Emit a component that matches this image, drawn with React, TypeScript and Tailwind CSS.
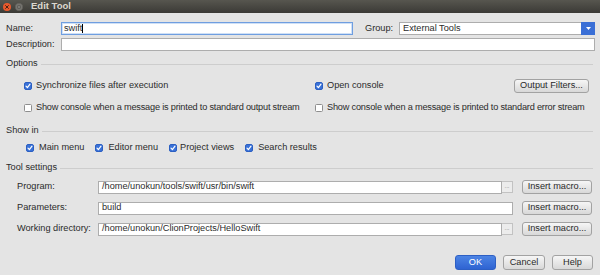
import React from "react";

const font = "font-['Liberation_Sans',Arial,sans-serif]";

function Check({ checked }: { checked?: boolean }) {
  if (checked) {
    return (
      <span className="w-[8px] h-[8px] shrink-0 rounded-[2px] bg-[#3a72d8] border border-[#2b5fc2] flex items-center justify-center">
        <svg width="6" height="6" viewBox="0 0 6 6">
          <path d="M1 3.2 L2.4 4.6 L5 1.2" fill="none" stroke="#fff" strokeWidth="1.2" strokeLinecap="round" strokeLinejoin="round" />
        </svg>
      </span>
    );
  }
  return <span className="w-[8px] h-[8px] shrink-0 rounded-[1.5px] bg-white border border-[#8e8e8e]" />;
}

function CheckItem({ label, checked, gap = "ml-[5px]" }: { label: string; checked?: boolean; gap?: string }) {
  return (
    <div className="flex items-center shrink-0 whitespace-nowrap">
      <Check checked={checked} />
      <span className={gap}>{label}</span>
    </div>
  );
}

function Section({ title }: { title: string }) {
  return (
    <div className="h-[10px] flex items-center">
      <span>{title}</span>
      <div className="flex-1 h-px bg-[#cdcdcd] ml-[3px] mr-[2px]" />
    </div>
  );
}

function Btn({ children, className = "" }: { children: React.ReactNode; className?: string }) {
  return (
    <div
      className={
        "flex items-center justify-center shrink-0 whitespace-nowrap rounded-[3px] border border-[#a2a2a2] bg-gradient-to-b from-[#f6f6f6] to-[#d8d8d8] text-[#2a2a2a] " +
        className
      }
    >
      {children}
    </div>
  );
}

function Field({ value, dots }: { value: string; dots?: boolean }) {
  return (
    <div className="flex-1 flex items-center">
      <div className="flex-1 h-[13px] bg-white border border-[#adadad] flex items-center pl-[3px]">{value}</div>
      {dots && (
        <div className="w-[11px] h-[12px] bg-[#ececec] border border-[#c2c2c2] border-l-0 flex items-center justify-center text-[6px] text-[#777] leading-none pb-[2px]">
          ...
        </div>
      )}
    </div>
  );
}

function ToolRow({ label, value, dots }: { label: string; value: string; dots?: boolean }) {
  return (
    <div className="mt-[7px] h-[14px] flex items-center pl-[11px] pr-[3px]">
      <span className="w-[81px]">{label}</span>
      <Field value={value} dots={dots} />
      <Btn className="ml-[9px] w-[70px] h-[14px]">Insert macro...</Btn>
    </div>
  );
}

export default function App() {
  return (
    <div className={`w-[600px] h-[275px] overflow-hidden bg-[#e4e4e4] text-[9.2px] text-[#2b2b2b] flex flex-col ${font}`}>
      {/* title bar */}
      <div className="h-[13px] shrink-0 bg-gradient-to-b from-[#57564f] to-[#3b3a36] flex items-center pl-[3px]">
        <svg width="8" height="8" viewBox="0 0 8 8">
          <circle cx="4" cy="4" r="4" fill="#e9592c" />
          <path d="M2.6 2.6 L5.4 5.4 M5.4 2.6 L2.6 5.4" stroke="#4a2012" strokeWidth="1" strokeLinecap="round" />
        </svg>
        <svg width="8" height="8" viewBox="0 0 8 8" className="ml-[4px]">
          <circle cx="4" cy="4" r="3.7" fill="#7a7974" stroke="#5e5d58" strokeWidth="0.6" />
          <circle cx="4" cy="4" r="1.8" fill="none" stroke="#555450" strokeWidth="0.8" />
        </svg>
        <span className="ml-[8px] font-bold text-[9.5px] text-[#dcd8cf]">Edit Tool</span>
      </div>

      <div className="flex flex-col pl-[6px] pr-[5px]">
        {/* name / group */}
        <div className="mt-[9px] h-[13px] flex items-center">
          <span className="w-[55px]">Name:</span>
          <div className="w-[292px] h-[13px] bg-white border border-[#6f9ee0] shadow-[inset_0_0_0_1px_#cfe0f6] flex items-center pl-[2px]">
            swift<span className="w-px h-[9px] bg-black" />
          </div>
          <span className="ml-[12px] w-[34px]">Group:</span>
          <div className="flex-1 h-[13px] bg-white border border-[#adadad] flex items-center">
            <span className="flex-1 pl-[3px]">External Tools</span>
            <div className="w-[14px] h-[13px] -mr-px bg-[#3a6fd6] flex items-center justify-center">
              <svg width="5" height="3" viewBox="0 0 5 3">
                <path d="M0 0 H5 L2.5 3 Z" fill="#fff" />
              </svg>
            </div>
          </div>
        </div>

        {/* description */}
        <div className="mt-[3px] h-[13px] flex items-center">
          <span className="w-[55px]">Description:</span>
          <div className="flex-1 h-[13px] bg-white border border-[#adadad]" />
        </div>

        <div className="mt-[8px]">
          <Section title="Options" />
        </div>

        <div className="mt-[10px] h-[14px] flex items-center pl-[18px]">
          <div className="w-[291px] shrink-0">
            <CheckItem checked label="Synchronize files after execution" gap="ml-[4px]" />
          </div>
          <CheckItem checked label="Open console" gap="ml-[4px]" />
          <Btn className="ml-auto mr-[6px] w-[75px] h-[14px]">Output Filters...</Btn>
        </div>

        <div className="mt-[8px] h-[14px] flex items-center pl-[18px] tracking-[-0.2px]">
          <div className="w-[291px] shrink-0">
            <CheckItem label="Show console when a message is printed to standard output stream" gap="ml-[4px]" />
          </div>
          <CheckItem label="Show console when a message is printed to standard error stream" gap="ml-[4px]" />
        </div>

        <div className="mt-[11px]">
          <Section title="Show in" />
        </div>

        <div className="mt-[5px] h-[13px] flex items-center pl-[20px] gap-[11px]">
          <CheckItem checked label="Main menu" />
          <CheckItem checked label="Editor menu" />
          <CheckItem checked label="Project views" gap="ml-[3px]" />
          <CheckItem checked label="Search results" />
        </div>

        <div className="mt-[9px]">
          <Section title="Tool settings" />
        </div>

        <ToolRow label="Program:" value="/home/unokun/tools/swift/usr/bin/swift" dots />
        <ToolRow label="Parameters:" value="build" />
        <ToolRow label="Working directory:" value="/home/unokun/ClionProjects/HelloSwift" dots />

        {/* dialog buttons */}
        <div className="mt-[19px] h-[15px] flex justify-end gap-[7px] pr-[2px]">
          <div className="w-[41px] h-[15px] rounded-[3px] border border-[#2d5fc4] bg-gradient-to-b from-[#4c84e4] to-[#2f63d2] text-white flex items-center justify-center">
            OK
          </div>
          <Btn className="w-[42px] h-[15px]">Cancel</Btn>
          <Btn className="w-[41px] h-[15px]">Help</Btn>
        </div>
      </div>
    </div>
  );
}
